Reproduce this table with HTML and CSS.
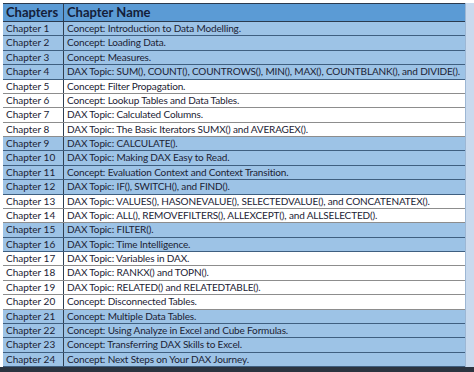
FILE: index.html
```html
<!DOCTYPE html>
<html>
<head>
<meta charset="utf-8">
<link rel="stylesheet" href="styles.css">
</head>
<body>
<div class="sheet">
  <div class="table">
    <div class="row head"><div class="c1">Chapters</div><div class="c2">Chapter Name</div></div>
    <div class="row blue"><div class="c1">Chapter 1</div><div class="c2">Concept: Introduction to Data Modelling.</div></div>
    <div class="row blue"><div class="c1">Chapter 2</div><div class="c2">Concept: Loading Data.</div></div>
    <div class="row blue"><div class="c1">Chapter 3</div><div class="c2">Concept: Measures.</div></div>
    <div class="row blue"><div class="c1">Chapter 4</div><div class="c2">DAX Topic: SUM(), COUNT(), COUNTROWS(), MIN(), MAX(), COUNTBLANK(), and DIVIDE().</div></div>
    <div class="row"><div class="c1">Chapter 5</div><div class="c2">Concept: Filter Propagation.</div></div>
    <div class="row"><div class="c1">Chapter 6</div><div class="c2">Concept: Lookup Tables and Data Tables.</div></div>
    <div class="row"><div class="c1">Chapter 7</div><div class="c2">DAX Topic: Calculated Columns.</div></div>
    <div class="row"><div class="c1">Chapter 8</div><div class="c2">DAX Topic: The Basic Iterators SUMX() and AVERAGEX().</div></div>
    <div class="row blue"><div class="c1">Chapter 9</div><div class="c2">DAX Topic: CALCULATE().</div></div>
    <div class="row blue"><div class="c1">Chapter 10</div><div class="c2">DAX Topic: Making DAX Easy to Read.</div></div>
    <div class="row blue"><div class="c1">Chapter 11</div><div class="c2">Concept: Evaluation Context and Context Transition.</div></div>
    <div class="row blue"><div class="c1">Chapter 12</div><div class="c2">DAX Topic: IF(), SWITCH(), and FIND().</div></div>
    <div class="row"><div class="c1">Chapter 13</div><div class="c2">DAX Topic: VALUES(), HASONEVALUE(), SELECTEDVALUE(), and CONCATENATEX().</div></div>
    <div class="row"><div class="c1">Chapter 14</div><div class="c2">DAX Topic: ALL(), REMOVEFILTERS(), ALLEXCEPT(), and ALLSELECTED().</div></div>
    <div class="row blue"><div class="c1">Chapter 15</div><div class="c2">DAX Topic: FILTER().</div></div>
    <div class="row blue"><div class="c1">Chapter 16</div><div class="c2">DAX Topic: Time Intelligence.</div></div>
    <div class="row"><div class="c1">Chapter 17</div><div class="c2">DAX Topic: Variables in DAX.</div></div>
    <div class="row"><div class="c1">Chapter 18</div><div class="c2">DAX Topic: RANKX() and TOPN().</div></div>
    <div class="row"><div class="c1">Chapter 19</div><div class="c2">DAX Topic: RELATED() and RELATEDTABLE().</div></div>
    <div class="row"><div class="c1">Chapter 20</div><div class="c2">Concept: Disconnected Tables.</div></div>
    <div class="row blue"><div class="c1">Chapter 21</div><div class="c2">Concept: Multiple Data Tables.</div></div>
    <div class="row blue"><div class="c1">Chapter 22</div><div class="c2">Concept: Using Analyze in Excel and Cube Formulas.</div></div>
    <div class="row blue"><div class="c1">Chapter 23</div><div class="c2">Concept: Transferring DAX Skills to Excel.</div></div>
    <div class="row blue"><div class="c1">Chapter 24</div><div class="c2">Concept: Next Steps on Your DAX Journey.</div></div>
  </div>
  <div class="edge"></div>
</div>
<div class="foot"></div>
</body>
</html>
```
FILE: styles.css
```css
html, body {
  margin: 0;
  padding: 0;
  background: #ffffff;
  width: 474px;
  height: 372px;
  overflow: hidden;
}
.sheet {
  display: flex;
  padding: 3px 0 0 3px;
  height: 364px;
}
.table {
  width: 463px;
  display: flex;
  flex-direction: column;
  font-family: "Lato", "Open Sans", sans-serif;
  font-size: 10px;
  color: #1b2234;
  border-top: 1px solid #2a3a4e;
}
.row {
  display: flex;
  height: 14.375px;
  box-sizing: border-box;
  border-bottom: 1px solid #8d8d8d;
  background: #ffffff;
  line-height: 13.4px;
  white-space: nowrap;
}
.row.blue {
  background: #9dc3e6;
  border-bottom-color: #3f5f80;
}
.row.head {
  height: 18px;
  background: #5b9bd5;
  border-bottom: 1px solid #2a3a4e;
  font-size: 13px;
  font-weight: bold;
  line-height: 17px;
  color: #14203a;
  letter-spacing: 0;
}
.c1 {
  width: 61px;
  flex: none;
  padding-left: 3px;
  box-sizing: border-box;
  border-right: 1px solid #2f3f52;
}
.c2 {
  flex: 1;
  padding-left: 3px;
  overflow: hidden;
  letter-spacing: -0.15px;
}
.head .c2 {
  letter-spacing: 0;
}
.edge {
  width: 8px;
  background: #c9daee;
  border-left: 1px solid #9db7d4;
}
.foot {
  height: 5px;
  background: #2b3440;
}
```
